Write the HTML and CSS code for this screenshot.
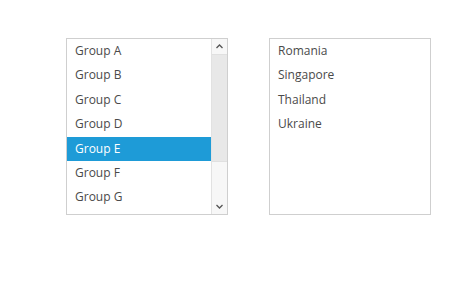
FILE: index.html
```html
<!DOCTYPE html>
<html>
<head>
<meta charset="utf-8">
<link rel="stylesheet" href="styles.css">
</head>
<body>
<div class="page">
  <div class="listbox">
    <ul class="items">
      <li class="item">Group A</li>
      <li class="item">Group B</li>
      <li class="item">Group C</li>
      <li class="item">Group D</li>
      <li class="item selected">Group E</li>
      <li class="item">Group F</li>
      <li class="item">Group G</li>
    </ul>
    <div class="scrollbar">
      <div class="arrow">
        <svg width="7" height="5" viewBox="0 0 7 5"><path d="M0.5 4 L3.5 1 L6.5 4" fill="none" stroke="#555" stroke-width="1.3"/></svg>
      </div>
      <div class="track">
        <div class="thumb"></div>
      </div>
      <div class="arrow">
        <svg width="7" height="5" viewBox="0 0 7 5"><path d="M0.5 1 L3.5 4 L6.5 1" fill="none" stroke="#555" stroke-width="1.3"/></svg>
      </div>
    </div>
  </div>
  <div class="listbox plain">
    <ul class="items">
      <li class="item">Romania</li>
      <li class="item">Singapore</li>
      <li class="item">Thailand</li>
      <li class="item">Ukraine</li>
    </ul>
  </div>
</div>
</body>
</html>
```
FILE: styles.css
```css
html, body {
  margin: 0;
  padding: 0;
  background: #ffffff;
}
.page {
  display: flex;
  gap: 41px;
  padding: 38px 0 0 66px;
  font-family: "Open Sans", "Noto Sans", sans-serif;
  font-size: 12px;
  color: #4a4a4a;
}
.listbox {
  box-sizing: border-box;
  width: 162px;
  height: 177px;
  border: 1px solid #cfcfcf;
  display: flex;
  overflow: hidden;
  background: #fff;
}
.items {
  list-style: none;
  margin: 0;
  padding: 0;
  flex: 1;
  overflow: hidden;
}
.item {
  height: 24.4px;
  line-height: 24px;
  padding-left: 8px;
  white-space: nowrap;
}
.item.selected {
  background: #1e9bd7;
  color: #ffffff;
}
.scrollbar {
  width: 15px;
  border-left: 1px solid #e2e2e2;
  display: flex;
  flex-direction: column;
  background: #f7f7f7;
}
.arrow {
  height: 15px;
  display: flex;
  align-items: center;
  justify-content: center;
  background: #f7f7f7;
}
.track {
  flex: 1;
  display: flex;
  flex-direction: column;
}
.thumb {
  height: 106px;
  background: #e8e8e8;
  border-top: 1px solid #e0e0e0;
  border-bottom: 1px solid #e0e0e0;
}
```
